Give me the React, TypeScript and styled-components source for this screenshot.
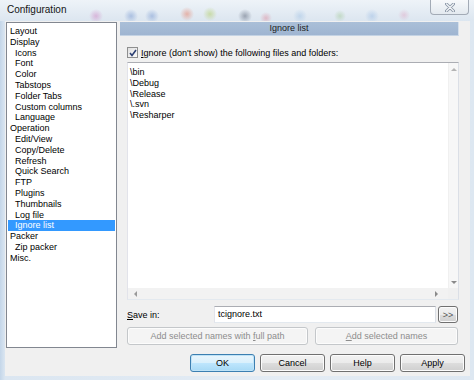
import React from "react";
import styled, { createGlobalStyle } from "styled-components";

const GlobalStyle = createGlobalStyle`
  html, body {
    margin: 0;
    padding: 0;
  }
  body {
    width: 474px;
    height: 380px;
    overflow: hidden;
    font-family: "Liberation Sans", Arial, sans-serif;
    font-size: 9px;
    color: #000;
  }
`;

const Window = styled.div`
  width: 474px;
  height: 380px;
  display: flex;
  flex-direction: column;
  background: linear-gradient(90deg, #c4d6e9 0, #dbe6f1 5px, #e4ecf4 60%, #dde7f1 100%);
`;

const TitleBar = styled.div`
  height: 21px;
  display: flex;
  justify-content: space-between;
  align-items: flex-start;
  background:
    radial-gradient(circle at 96px 16px, rgba(205, 120, 190, 0.45) 0, transparent 7px),
    radial-gradient(circle at 131px 16px, rgba(90, 130, 200, 0.4) 0, transparent 7px),
    radial-gradient(circle at 152px 16px, rgba(90, 130, 200, 0.4) 0, transparent 7px),
    radial-gradient(circle at 187px 14px, rgba(230, 110, 80, 0.45) 0, transparent 7px),
    radial-gradient(circle at 210px 14px, rgba(170, 200, 80, 0.45) 0, transparent 7px),
    radial-gradient(circle at 245px 16px, rgba(70, 80, 100, 0.45) 0, transparent 7px),
    radial-gradient(circle at 266px 18px, rgba(220, 100, 120, 0.35) 0, transparent 6px),
    radial-gradient(circle at 300px 16px, rgba(120, 170, 220, 0.3) 0, transparent 7px),
    radial-gradient(circle at 340px 16px, rgba(140, 190, 120, 0.35) 0, transparent 6px),
    radial-gradient(circle at 372px 16px, rgba(110, 160, 220, 0.3) 0, transparent 7px),
    radial-gradient(circle at 404px 15px, rgba(220, 130, 170, 0.3) 0, transparent 6px),
    linear-gradient(#eef3f8, #dce6f0);
`;

const Title = styled.div`
  padding: 4px 0 0 7px;
  font-size: 10px;
  color: #141414;
`;

const CloseButton = styled.div`
  width: 37px;
  height: 14px;
  margin-right: 5px;
  border: 1px solid #a3abb6;
  border-top: none;
  border-radius: 0 0 4px 4px;
  background: linear-gradient(#f7f9fb, #e3e9ef);
  display: flex;
  align-items: center;
  justify-content: center;
`;

const Client = styled.div`
  flex: 1;
  margin: 0 4px 4px 5px;
  background: #f0f0f0;
  display: flex;
  flex-direction: column;
`;

const Main = styled.div`
  height: 329px;
  display: flex;
  align-items: flex-start;
  gap: 2px;
  padding: 1px 1px 0 1px;
`;

const Tree = styled.div`
  width: 107px;
  height: 323px;
  border: 1px solid #828790;
  background: #fff;
  padding: 1px 1px 0 1px;
`;

const TreeItem = styled.div<{ $level: number; $selected?: boolean }>`
  height: 10.8px;
  line-height: 10.8px;
  padding-left: ${(p) => (p.$level === 0 ? 2 : 7)}px;
  white-space: nowrap;
  background: ${(p) => (p.$selected ? "#3399ff" : "transparent")};
  color: ${(p) => (p.$selected ? "#fff" : "#000")};
  &:first-child {
    margin-top: 2px;
  }
`;

const RightPanel = styled.div`
  flex: 1;
  display: flex;
  flex-direction: column;
  padding: 0 10px 0 8px;
`;

const Header = styled.div`
  height: 13px;
  line-height: 13px;
  margin: 0 0 0 -7px;
  text-align: center;
  color: #1c1c1c;
  background: linear-gradient(#aabfd8, #9fb5d1);
  border-bottom: 1px solid #c4d3e4;
  border-right: 1px solid #d4dfeb;
`;

const CheckRow = styled.div`
  margin-top: 11px;
  height: 11px;
  display: flex;
  align-items: center;
  gap: 3px;
`;

const CheckBox = styled.div`
  width: 9px;
  height: 9px;
  border: 1px solid #8e8f8f;
  background: linear-gradient(135deg, #e0e0e0, #fbfbfb);
  display: flex;
  align-items: center;
  justify-content: center;
`;

const ListBox = styled.div`
  margin-top: 4px;
  height: 236px;
  border: 1px solid #abadb3;
  border-left-color: #e2e3ea;
  border-right-color: #dbdfe6;
  border-bottom-color: #e3e9ef;
  background: #fff;
  display: grid;
  grid-template-columns: 1fr 10px;
  grid-template-rows: 1fr 11px;
`;

const ListLines = styled.div`
  padding: 4px 0 0 2px;
`;

const ListLine = styled.div`
  height: 10.8px;
  line-height: 10.8px;
`;

const VScroll = styled.div`
  background: #f7f7f7;
  border-left: 1px solid #f0f0f0;
  display: flex;
  flex-direction: column;
  justify-content: space-between;
  align-items: center;
  padding: 5px 0 4px;
`;

const HScroll = styled.div`
  background: #f2f2f2;
  display: flex;
  justify-content: space-between;
  align-items: center;
  padding: 0 10px 0 6px;
`;

const Corner = styled.div`
  background: #f0f0f0;
`;

const Arrow = styled.span<{ $dir: "up" | "down" | "left" | "right" }>`
  width: 0;
  height: 0;
  border: 3px solid transparent;
  ${(p) =>
    p.$dir === "up"
      ? "border-bottom-color: #b4b4b4; border-top-width: 0;"
      : p.$dir === "down"
      ? "border-top-color: #8a8a8a; border-bottom-width: 0;"
      : p.$dir === "left"
      ? "border-right-color: #9a9a9a; border-left-width: 0;"
      : "border-left-color: #8a8a8a; border-right-width: 0;"}
`;

const SaveRow = styled.div`
  margin-top: 6px;
  height: 17px;
  display: flex;
  align-items: center;
  padding-right: 1px;
`;

const SaveLabel = styled.div`
  width: 87px;
`;

const TextInput = styled.div`
  flex: 1;
  height: 15px;
  line-height: 15px;
  border: 1px solid #abadb3;
  border-left-color: #e2e3ea;
  border-right-color: #dbdfe6;
  border-bottom-color: #e3e9ef;
  background: #fff;
  padding-left: 3px;
`;

const Button = styled.div<{ $width?: number; $disabled?: boolean; $focused?: boolean }>`
  ${(p) => (p.$width ? `width: ${p.$width}px;` : "flex: 1;")}
  box-sizing: border-box;
  height: 18px;
  display: flex;
  align-items: center;
  justify-content: center;
  border-radius: 3px;
  border: 1px solid ${(p) => (p.$disabled ? "#c4c7ca" : p.$focused ? "#3c7fb1" : "#707070")};
  background: ${(p) =>
    p.$disabled
      ? "#f4f4f4"
      : p.$focused
      ? "linear-gradient(#eaf6fd 0, #d9f0fc 50%, #bee6fd 51%, #a7d9f5 100%)"
      : "linear-gradient(#f2f2f2 0, #ebebeb 50%, #dddddd 51%, #cfcfcf 100%)"};
  box-shadow: ${(p) => (p.$focused ? "inset 0 0 0 1px #bfe3f7" : "inset 0 0 0 1px #fcfcfc")};
  color: ${(p) => (p.$disabled ? "#8d8d8d" : "#000")};
  white-space: nowrap;
`;

const MoreButton = styled(Button)`
  height: 17px;
  margin-left: 2px;
  color: #555;
`;

const AddRow = styled.div`
  margin-top: 4px;
  display: flex;
  gap: 7px;
  padding-right: 1px;
`;

const ButtonRow = styled.div`
  margin-top: 3px;
  display: flex;
  justify-content: flex-end;
  gap: 5px;
  padding-right: 5px;
`;

const treeItems: { label: string; level: number; selected?: boolean }[] = [
  { label: "Layout", level: 0 },
  { label: "Display", level: 0 },
  { label: "Icons", level: 1 },
  { label: "Font", level: 1 },
  { label: "Color", level: 1 },
  { label: "Tabstops", level: 1 },
  { label: "Folder Tabs", level: 1 },
  { label: "Custom columns", level: 1 },
  { label: "Language", level: 1 },
  { label: "Operation", level: 0 },
  { label: "Edit/View", level: 1 },
  { label: "Copy/Delete", level: 1 },
  { label: "Refresh", level: 1 },
  { label: "Quick Search", level: 1 },
  { label: "FTP", level: 1 },
  { label: "Plugins", level: 1 },
  { label: "Thumbnails", level: 1 },
  { label: "Log file", level: 1 },
  { label: "Ignore list", level: 1, selected: true },
  { label: "Packer", level: 0 },
  { label: "Zip packer", level: 1 },
  { label: "Misc.", level: 0 },
];

const ignored = ["\\bin", "\\Debug", "\\Release", "\\.svn", "\\Resharper"];

export default function App() {
  return (
    <Window>
      <GlobalStyle />
      <TitleBar>
        <Title>Configuration</Title>
        <CloseButton>
          <svg width="10" height="9" viewBox="0 0 10 9">
            <path d="M1.5 1 L8.5 8 M8.5 1 L1.5 8" stroke="#8a96a6" strokeWidth="3" strokeLinecap="round" />
            <path d="M1.5 1 L8.5 8 M8.5 1 L1.5 8" stroke="#f4f6f8" strokeWidth="1.2" strokeLinecap="round" />
          </svg>
        </CloseButton>
      </TitleBar>
      <Client>
        <Main>
          <Tree>
            {treeItems.map((t) => (
              <TreeItem key={t.label} $level={t.level} $selected={t.selected}>
                {t.label}
              </TreeItem>
            ))}
          </Tree>
          <RightPanel>
            <Header>Ignore list</Header>
            <CheckRow>
              <CheckBox>
                <svg width="8" height="8" viewBox="0 0 8 8">
                  <path d="M1 4 L3 6.5 L7 1" fill="none" stroke="#2b3f73" strokeWidth="1.6" />
                </svg>
              </CheckBox>
              <span>
                <u>I</u>gnore (don't show) the following files and folders:
              </span>
            </CheckRow>
            <ListBox>
              <ListLines>
                {ignored.map((l) => (
                  <ListLine key={l}>{l}</ListLine>
                ))}
              </ListLines>
              <VScroll>
                <Arrow $dir="up" />
                <Arrow $dir="down" />
              </VScroll>
              <HScroll>
                <Arrow $dir="left" />
                <Arrow $dir="right" />
              </HScroll>
              <Corner />
            </ListBox>
            <SaveRow>
              <SaveLabel>
                <u>S</u>ave in:
              </SaveLabel>
              <TextInput>tcignore.txt</TextInput>
              <MoreButton $width={20}>&gt;&gt;</MoreButton>
            </SaveRow>
            <AddRow>
              <Button $width={181} $disabled>
                Add selected names with&nbsp;<u>f</u>ull path
              </Button>
              <Button $disabled>
                <u>A</u>dd selected names
              </Button>
            </AddRow>
          </RightPanel>
        </Main>
        <ButtonRow>
          <Button $width={65} $focused>
            OK
          </Button>
          <Button $width={65}>Cancel</Button>
          <Button $width={65}>Help</Button>
          <Button $width={65}>Apply</Button>
        </ButtonRow>
      </Client>
    </Window>
  );
}
